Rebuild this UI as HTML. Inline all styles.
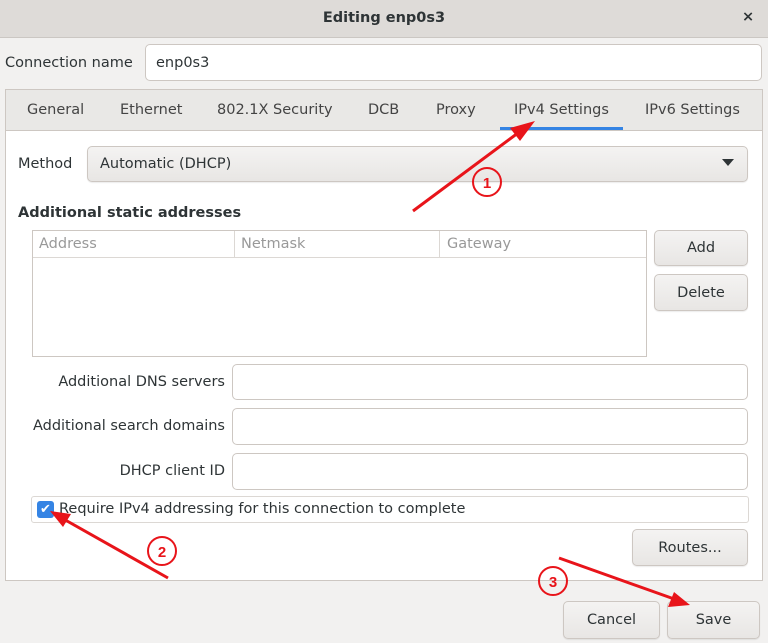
<!DOCTYPE html>
<html><head><style>
*{box-sizing:border-box;margin:0;padding:0}
body{width:768px;height:643px;background:#f2f1f0;font-family:"DejaVu Sans","Liberation Sans",sans-serif;font-size:14.5px;color:#2e3436;position:relative;overflow:hidden}
.a{position:absolute}
.entry{position:absolute;background:#fff;border:1px solid #cdc7c2;border-radius:5px}
.btn{position:absolute;background:linear-gradient(#f4f3f2,#e8e6e4);border:1px solid #cdc7c2;border-radius:5px;display:flex;align-items:center;justify-content:center;box-shadow:0 1px 1px rgba(0,0,0,.08)}
.lbl{position:absolute;white-space:nowrap}
.r{text-align:right;width:225px;left:0}
</style></head><body>
<div class="a" style="left:0;top:0;width:768px;height:38px;background:#dedbd8;border-bottom:1px solid #cbc7c3"></div>
<div class="lbl" style="left:0;width:768px;top:10px;text-align:center;font-weight:bold">Editing enp0s3</div>
<div class="lbl" style="left:742px;top:9px;font-weight:bold">×</div>
<div class="lbl" style="left:5px;top:55px">Connection name</div>
<div class="entry" style="left:145px;top:44px;width:617px;height:37px"></div>
<div class="lbl" style="left:156px;top:55px">enp0s3</div>
<div class="a" style="left:5px;top:89px;width:758px;height:492px;border:1px solid #cdc7c2;background:#fff"></div>
<div class="a" style="left:6px;top:90px;width:756px;height:41px;background:#e9e8e6;border-bottom:1px solid #cdc7c2"></div>
<div class="lbl" style="left:27px;top:102px;color:#444">General</div>
<div class="lbl" style="left:120px;top:102px;color:#444">Ethernet</div>
<div class="lbl" style="left:217px;top:102px;color:#444">802.1X Security</div>
<div class="lbl" style="left:368px;top:102px;color:#444">DCB</div>
<div class="lbl" style="left:436px;top:102px;color:#444">Proxy</div>
<div class="lbl" style="left:514px;top:102px;color:#444">IPv4 Settings</div>
<div class="lbl" style="left:645px;top:102px;color:#444">IPv6 Settings</div>
<div class="a" style="left:500px;top:127px;width:123px;height:3px;background:#3584e4"></div>
<div class="lbl" style="left:18px;top:156px">Method</div>
<div class="btn" style="left:87px;top:146px;width:661px;height:36px"></div>
<div class="lbl" style="left:100px;top:156px">Automatic (DHCP)</div>
<div class="a" style="left:722px;top:159px;border-left:6px solid transparent;border-right:6px solid transparent;border-top:7px solid #2e3436"></div>
<div class="lbl" style="left:18px;top:205px;font-weight:bold">Additional static addresses</div>
<div class="a" style="left:32px;top:230px;width:615px;height:127px;border:1px solid #cdc7c2;background:#fff"></div>
<div class="a" style="left:33px;top:231px;width:613px;height:27px;border-bottom:1px solid #dcd8d4"></div>
<div class="a" style="left:234px;top:231px;width:1px;height:26px;background:#dcd8d4"></div>
<div class="a" style="left:439px;top:231px;width:1px;height:26px;background:#dcd8d4"></div>
<div class="lbl" style="left:39px;top:236px;color:#999">Address</div>
<div class="lbl" style="left:241px;top:236px;color:#999">Netmask</div>
<div class="lbl" style="left:447px;top:236px;color:#999">Gateway</div>
<div class="btn" style="left:654px;top:230px;width:94px;height:36px">Add</div>
<div class="btn" style="left:654px;top:274px;width:94px;height:37px">Delete</div>
<div class="lbl r" style="top:374px">Additional DNS servers</div>
<div class="entry" style="left:232px;top:364px;width:516px;height:36px"></div>
<div class="lbl r" style="top:418px">Additional search domains</div>
<div class="entry" style="left:232px;top:408px;width:516px;height:37px"></div>
<div class="lbl r" style="top:463px">DHCP client ID</div>
<div class="entry" style="left:232px;top:453px;width:516px;height:37px"></div>
<div class="a" style="left:31px;top:496px;width:718px;height:27px;border:1px solid #dcd8d4;border-radius:3px"></div>
<div class="a" style="left:37px;top:501px;width:17px;height:17px;background:#3584e4;border-radius:3px;color:#fff;font-size:13px;line-height:17px;text-align:center;font-weight:bold">✔</div>
<div class="lbl" style="left:59px;top:501px">Require IPv4 addressing for this connection to complete</div>
<div class="btn" style="left:632px;top:529px;width:116px;height:37px">Routes...</div>
<div class="btn" style="left:563px;top:601px;width:97px;height:38px">Cancel</div>
<div class="btn" style="left:667px;top:601px;width:93px;height:38px">Save</div>
<svg class="a" style="left:0;top:0" width="768" height="643">
<g stroke="#e8141a" stroke-width="3" fill="none">
<line x1="413" y1="211" x2="522" y2="130"/>
<circle cx="487" cy="182" r="14" stroke-width="2"/>
<line x1="168" y1="578" x2="60" y2="517"/>
<circle cx="162" cy="551" r="14" stroke-width="2"/>
<line x1="559" y1="558" x2="677" y2="600"/>
<circle cx="553" cy="581" r="14" stroke-width="2"/>
</g>
<g fill="#e8141a">
<polygon points="535,121 520,141 510,128"/>
<polygon points="50,511 71,514 63,527"/>
<polygon points="690,605 668,607 674,592"/>
</g>
<g fill="#e8141a" font-family="Liberation Sans" font-weight="bold" font-size="15" text-anchor="middle">
<text x="487" y="188">1</text><text x="162" y="557">2</text><text x="553" y="587">3</text>
</g>
</svg>
</body></html>
